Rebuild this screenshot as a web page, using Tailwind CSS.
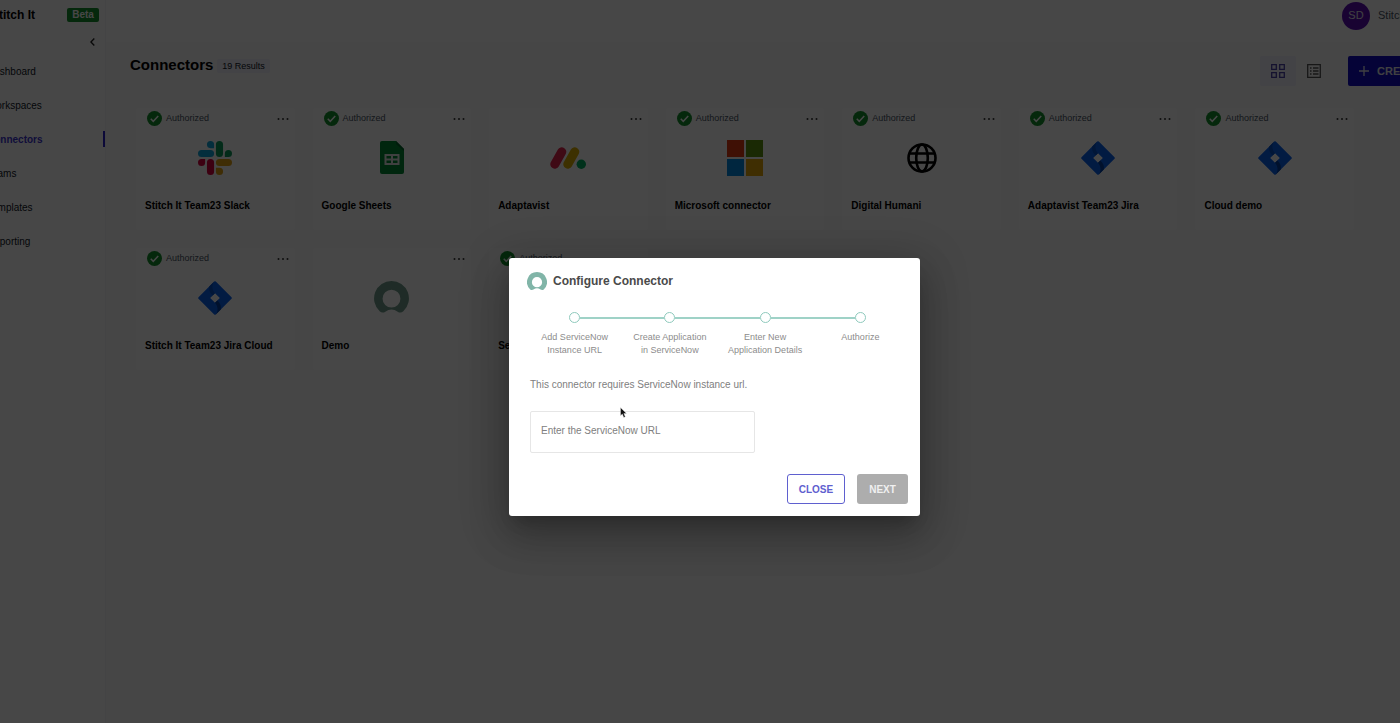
<!DOCTYPE html>
<html lang="en">
<head>
    <meta charset="UTF-8">
    <meta name="viewport" content="width=device-width, initial-scale=1.0">
    <title>Stitch It - Connectors</title>
    <!-- Tailwind CSS CDN -->
    <script src="https://cdn.jsdelivr.net/npm/@tailwindcss/browser@4"></script>
</head>
<body class="bg-white font-['Liberation_Sans',Arial,sans-serif] text-black">

    <!-- Icon sprite -->
    <svg class="hidden" xmlns="http://www.w3.org/2000/svg">
        <symbol id="icon-check" viewBox="0 0 24 24">
            <circle cx="12" cy="12" r="12" fill="#148f2c"/>
            <path d="M6 12.500l4 4 8-8.500" fill="none" stroke="#fff" stroke-width="2.400"/>
        </symbol>
        <symbol id="icon-more" viewBox="0 0 12 4">
            <circle cx="1.500" cy="2" r="1" fill="#333"/>
            <circle cx="6" cy="2" r="1" fill="#333"/>
            <circle cx="10.500" cy="2" r="1" fill="#333"/>
        </symbol>
        <symbol id="icon-slack" viewBox="0 0 24 24">
            <path fill="#d8003f" d="M5.042 15.165a2.528 2.528 0 0 1-2.52 2.523A2.528 2.528 0 0 1 0 15.165a2.527 2.527 0 0 1 2.522-2.52h2.52v2.52zM6.313 15.165a2.527 2.527 0 0 1 2.521-2.52 2.527 2.527 0 0 1 2.521 2.52v6.313A2.528 2.528 0 0 1 8.834 24a2.528 2.528 0 0 1-2.521-2.522v-6.313z"/>
            <path fill="#10a5da" d="M8.834 5.042a2.528 2.528 0 0 1-2.521-2.520A2.528 2.528 0 0 1 8.834 0a2.528 2.528 0 0 1 2.521 2.522v2.520H8.834zM8.834 6.313a2.528 2.528 0 0 1 2.521 2.521 2.528 2.528 0 0 1-2.521 2.521H2.522A2.528 2.528 0 0 1 0 8.834a2.528 2.528 0 0 1 2.522-2.521h6.312z"/>
            <path fill="#0c9a5c" d="M18.956 8.834a2.528 2.528 0 0 1 2.522-2.521A2.528 2.528 0 0 1 24 8.834a2.528 2.528 0 0 1-2.522 2.521h-2.522V8.834zM17.688 8.834a2.528 2.528 0 0 1-2.523 2.521 2.527 2.527 0 0 1-2.520-2.521V2.522A2.527 2.527 0 0 1 15.165 0a2.528 2.528 0 0 1 2.523 2.522v6.312z"/>
            <path fill="#e0a012" d="M15.165 18.956a2.528 2.528 0 0 1 2.523 2.522A2.528 2.528 0 0 1 15.165 24a2.527 2.527 0 0 1-2.520-2.522v-2.522h2.520zM15.165 17.688a2.527 2.527 0 0 1-2.520-2.523 2.526 2.526 0 0 1 2.520-2.520h6.313A2.527 2.527 0 0 1 24 15.165a2.528 2.528 0 0 1-2.522 2.523h-6.313z"/>
        </symbol>
        <symbol id="icon-sheets" viewBox="0 0 24 33">
            <path d="M2 0h14l8 8v23a2 2 0 0 1-2 2H2a2 2 0 0 1-2-2V2a2 2 0 0 1 2-2z" fill="#008a32"/>
            <path d="M16 0l8 8v2l-8-7z" fill="#05602c"/>
            <path fill-rule="evenodd" d="M4.500 13h15v11h-15zM6.500 15v2.500h4.500V15zm6.500 0v2.500h4.500V15zM6.500 19.500V22h4.500v-2.500zm6.500 0V22h4.500v-2.500z" fill="#e6e6e6"/>
        </symbol>
        <symbol id="icon-monday" viewBox="0 0 36 22">
            <path d="M4.800 17.200L11.800 4.800" stroke="#e0254c" stroke-width="9" stroke-linecap="round"/>
            <path d="M17.800 17.200L24.800 4.800" stroke="#dcae00" stroke-width="9" stroke-linecap="round"/>
            <circle cx="31.300" cy="17.200" r="4.700" fill="#00b060"/>
        </symbol>
        <symbol id="icon-microsoft" viewBox="0 0 36 36">
            <path d="M0 0h17v17H0z" fill="#e03c14"/>
            <path d="M19 0h17v17H19z" fill="#5e9410"/>
            <path d="M0 19h17v17H0z" fill="#0088e0"/>
            <path d="M19 19h17v17H19z" fill="#e0a408"/>
        </symbol>
        <symbol id="icon-globe" viewBox="0 0 30 30">
            <g fill="none" stroke="#000" stroke-width="2.600">
                <circle cx="15" cy="15" r="13.500"/>
                <ellipse cx="15" cy="15" rx="5.800" ry="13.500"/>
                <path d="M2.500 10.500h25M2.500 19.500h25"/>
            </g>
        </symbol>
        <symbol id="icon-jira" viewBox="0 0 34 34">
            <path d="M16.200.5a1.200 1.200 0 0 1 1.600 0L33.500 16.200a1.200 1.200 0 0 1 0 1.600L17.800 33.500a1.200 1.200 0 0 1-1.600 0L.5 17.800a1.200 1.200 0 0 1 0-1.600zM17 12.200L12.200 17l4.800 4.800 4.800-4.800z" fill="#0a62ee" fill-rule="evenodd"/>
            <path d="M17 12.200L14.600 14.600C11.500 11.500 10.500 8.500 11.200 5.500L16.200.5C13.500 4 14 9 17 12.200z" fill="#0650c4"/>
            <path d="M17 21.800l2.400-2.400c3.100 3.100 4.100 6.100 3.400 9.100l-5 5C20.500 30 20 25 17 21.800z" fill="#043f9e"/>
        </symbol>
        <symbol id="icon-servicenow" viewBox="0 0 36 34">
            <path fill="currentColor" fill-rule="evenodd" d="M18 0A18 18 0 0 0 5.800 31.200c1.600 1.500 4 1.700 5.800.4a10.800 10.800 0 0 1 12.800 0c1.800 1.300 4.200 1.100 5.800-.4A18 18 0 0 0 18 0zM18 9a9.200 9.200 0 1 1 0 18.400A9.200 9.200 0 0 1 18 9z"/>
        </symbol>
    </svg>

    <div class="h-screen overflow-hidden">
    <div class="relative -ml-10 -mr-[69px] flex h-[calc(100vh+51px)]">

        <!-- Sidebar -->
        <aside class="w-[146px] shrink-0 border-r border-gray-100 bg-white">
            <div class="flex h-[29px] items-center justify-between pl-[31px] pr-[6px]">
                <span class="text-[12px] font-bold">Stitch It</span>
                <span class="flex h-[14px] w-8 items-center justify-center rounded-xs bg-[#148f2c] text-[10px] font-bold text-white">Beta</span>
            </div>
            <div class="flex h-[25px] items-center justify-end pr-[10px]">
                <button type="button" aria-label="Collapse menu">
                    <svg class="h-2 w-[5px]" viewBox="0 0 5 8" fill="none" stroke="#222" stroke-width="1.400"><path d="M4.300.5L.9 4l3.400 3.500"/></svg>
                </button>
            </div>
            <nav class="flex flex-col text-[10px] text-gray-900">
                <a href="#" class="flex h-[34px] items-center pl-[27px]">Dashboard</a>
                <a href="#" class="flex h-[34px] items-center pl-[27px]">Workspaces</a>
                <a href="#" class="flex h-[34px] items-center justify-between pl-[27px] font-bold text-[#3d35d0]">
                    Connectors
                    <span class="h-4 w-[2px] bg-[#2b22c8]"></span>
                </a>
                <a href="#" class="flex h-[34px] items-center pl-[27px]">Teams</a>
                <a href="#" class="flex h-[34px] items-center pl-[27px]">Templates</a>
                <a href="#" class="flex h-[34px] items-center pl-[27px]">Reporting</a>
            </nav>
        </aside>

        <div class="flex min-w-0 flex-1 flex-col">
            <!-- Header -->
            <header class="flex h-[42px] items-center justify-end bg-white pb-[11px]">
                <div class="flex w-[127px] items-center gap-2">
                    <span class="flex size-7 items-center justify-center rounded-full bg-[#5a0cb4] text-[11px] text-gray-200">SD</span>
                    <span class="text-[11px] text-gray-600">Stitch Demo</span>
                </div>
            </header>

            <!-- Main Content -->
            <main class="flex-1 bg-[#f9f9fa] pt-[14px]">
                <div class="flex items-start pl-6 pr-[31px]">
                    <h1 class="text-[15px] leading-[18px] font-bold">Connectors</h1>
                    <span class="mt-[3px] ml-1 rounded-xs bg-[#f0f0fa] px-[5px] text-[9px] leading-[14px] text-gray-900">19 Results</span>
                    <div class="ml-auto flex items-center">
                        <button type="button" aria-label="Grid view" class="flex h-[30px] w-9 items-center justify-center rounded-xs bg-[#efeffa]">
                            <svg class="size-[14px]" viewBox="0 0 14 14" fill="none" stroke="#4b42a9" stroke-width="1.300"><path d="M.7.700h4.600v4.600H.7zM8.700.700h4.600v4.600H8.700zM.7 8.700h4.600v4.600H.7zM8.700 8.700h4.600v4.600H8.700z"/></svg>
                        </button>
                        <button type="button" aria-label="List view" class="flex h-[30px] w-9 items-center justify-center">
                            <svg class="size-[14px]" viewBox="0 0 14 14" fill="none" stroke="#555" stroke-width="1.300"><path d="M.7.700h12.600v12.600H.7zM3 4h1.500M6 4h5.500M3 7h1.500M6 7h5.500M3 10h1.500M6 10h5.500"/></svg>
                        </button>
                        <button type="button" class="ml-4 flex h-[30px] w-[90px] items-center gap-2 rounded-xs bg-[#120cc4] pl-[11px] text-[11px] font-bold text-gray-200">
                            <svg class="size-[10px]" viewBox="0 0 10 10" stroke="#e5e7eb" stroke-width="1.300"><path d="M5 0v10M0 5h10"/></svg>
                            CREATE
                        </button>
                    </div>
                </div>

                <!-- Connector cards -->
                <div class="mt-[22px] grid grid-cols-7 gap-[18px] pl-[30px] pr-[115px]">
                    <article class="rounded-xs bg-white pb-[14px]">
                        <div class="flex h-[21px] items-center pl-[11px] pr-[6px] text-[9px] text-gray-600">
                            <svg class="mr-1 size-[15px]"><use href="#icon-check"/></svg>Authorized
                            <button type="button" aria-label="More options" class="ml-auto"><svg class="h-1 w-3"><use href="#icon-more"/></svg></button>
                        </div>
                        <div class="flex h-[57px] items-center justify-center"><svg class="size-[34px]"><use href="#icon-slack"/></svg></div>
                        <h2 class="mt-[10px] pl-[9px] text-[10px] leading-5 font-bold">Stitch It Team23 Slack</h2>
                    </article>
                    <article class="rounded-xs bg-white pb-[14px]">
                        <div class="flex h-[21px] items-center pl-[11px] pr-[6px] text-[9px] text-gray-600">
                            <svg class="mr-1 size-[15px]"><use href="#icon-check"/></svg>Authorized
                            <button type="button" aria-label="More options" class="ml-auto"><svg class="h-1 w-3"><use href="#icon-more"/></svg></button>
                        </div>
                        <div class="flex h-[57px] items-center justify-center"><svg class="h-[33px] w-6"><use href="#icon-sheets"/></svg></div>
                        <h2 class="mt-[10px] pl-[9px] text-[10px] leading-5 font-bold">Google Sheets</h2>
                    </article>
                    <article class="rounded-xs bg-white pb-[14px]">
                        <div class="flex h-[21px] items-center pl-[11px] pr-[6px] text-[9px] text-gray-600">
                            <button type="button" aria-label="More options" class="ml-auto"><svg class="h-1 w-3"><use href="#icon-more"/></svg></button>
                        </div>
                        <div class="flex h-[57px] items-center justify-center"><svg class="h-[22px] w-9"><use href="#icon-monday"/></svg></div>
                        <h2 class="mt-[10px] pl-[9px] text-[10px] leading-5 font-bold">Adaptavist</h2>
                    </article>
                    <article class="rounded-xs bg-white pb-[14px]">
                        <div class="flex h-[21px] items-center pl-[11px] pr-[6px] text-[9px] text-gray-600">
                            <svg class="mr-1 size-[15px]"><use href="#icon-check"/></svg>Authorized
                            <button type="button" aria-label="More options" class="ml-auto"><svg class="h-1 w-3"><use href="#icon-more"/></svg></button>
                        </div>
                        <div class="flex h-[57px] items-center justify-center"><svg class="size-9"><use href="#icon-microsoft"/></svg></div>
                        <h2 class="mt-[10px] pl-[9px] text-[10px] leading-5 font-bold">Microsoft connector</h2>
                    </article>
                    <article class="rounded-xs bg-white pb-[14px]">
                        <div class="flex h-[21px] items-center pl-[11px] pr-[6px] text-[9px] text-gray-600">
                            <svg class="mr-1 size-[15px]"><use href="#icon-check"/></svg>Authorized
                            <button type="button" aria-label="More options" class="ml-auto"><svg class="h-1 w-3"><use href="#icon-more"/></svg></button>
                        </div>
                        <div class="flex h-[57px] items-center justify-center"><svg class="size-[30px]"><use href="#icon-globe"/></svg></div>
                        <h2 class="mt-[10px] pl-[9px] text-[10px] leading-5 font-bold">Digital Humani</h2>
                    </article>
                    <article class="rounded-xs bg-white pb-[14px]">
                        <div class="flex h-[21px] items-center pl-[11px] pr-[6px] text-[9px] text-gray-600">
                            <svg class="mr-1 size-[15px]"><use href="#icon-check"/></svg>Authorized
                            <button type="button" aria-label="More options" class="ml-auto"><svg class="h-1 w-3"><use href="#icon-more"/></svg></button>
                        </div>
                        <div class="flex h-[57px] items-center justify-center"><svg class="size-[34px]"><use href="#icon-jira"/></svg></div>
                        <h2 class="mt-[10px] pl-[9px] text-[10px] leading-5 font-bold">Adaptavist Team23 Jira</h2>
                    </article>
                    <article class="rounded-xs bg-white pb-[14px]">
                        <div class="flex h-[21px] items-center pl-[11px] pr-[6px] text-[9px] text-gray-600">
                            <svg class="mr-1 size-[15px]"><use href="#icon-check"/></svg>Authorized
                            <button type="button" aria-label="More options" class="ml-auto"><svg class="h-1 w-3"><use href="#icon-more"/></svg></button>
                        </div>
                        <div class="flex h-[57px] items-center justify-center"><svg class="size-[34px]"><use href="#icon-jira"/></svg></div>
                        <h2 class="mt-[10px] pl-[9px] text-[10px] leading-5 font-bold">Cloud demo</h2>
                    </article>
                    <article class="rounded-xs bg-white pb-[14px]">
                        <div class="flex h-[21px] items-center pl-[11px] pr-[6px] text-[9px] text-gray-600">
                            <svg class="mr-1 size-[15px]"><use href="#icon-check"/></svg>Authorized
                            <button type="button" aria-label="More options" class="ml-auto"><svg class="h-1 w-3"><use href="#icon-more"/></svg></button>
                        </div>
                        <div class="flex h-[57px] items-center justify-center"><svg class="size-[34px]"><use href="#icon-jira"/></svg></div>
                        <h2 class="mt-[10px] pl-[9px] text-[10px] leading-5 font-bold">Stitch It Team23 Jira Cloud</h2>
                    </article>
                    <article class="rounded-xs bg-white pb-[14px]">
                        <div class="flex h-[21px] items-center pl-[11px] pr-[6px] text-[9px] text-gray-600">
                            <button type="button" aria-label="More options" class="ml-auto"><svg class="h-1 w-3"><use href="#icon-more"/></svg></button>
                        </div>
                        <div class="flex h-[57px] items-center justify-center"><svg class="h-[33px] w-[35px] text-[#6f9c8b]"><use href="#icon-servicenow"/></svg></div>
                        <h2 class="mt-[10px] pl-[9px] text-[10px] leading-5 font-bold">Demo</h2>
                    </article>
                    <article class="rounded-xs bg-white pb-[14px]">
                        <div class="flex h-[21px] items-center pl-[11px] pr-[6px] text-[9px] text-gray-600">
                            <svg class="mr-1 size-[15px]"><use href="#icon-check"/></svg>Authorized
                            <button type="button" aria-label="More options" class="ml-auto"><svg class="h-1 w-3"><use href="#icon-more"/></svg></button>
                        </div>
                        <div class="flex h-[57px] items-center justify-center"><svg class="h-[33px] w-[35px] text-[#6f9c8b]"><use href="#icon-servicenow"/></svg></div>
                        <h2 class="mt-[10px] pl-[9px] text-[10px] leading-5 font-bold">ServiceNow</h2>
                    </article>
                </div>
            </main>
        </div>

        <!-- Configure dialog -->
        <div class="absolute inset-0 flex items-center justify-center bg-black/72">
            <div role="dialog" aria-labelledby="dialogTitle" class="relative w-full max-w-[411px] rounded-[3px] bg-white pt-[13px] pr-3 pb-3 pl-[18px] shadow-[0_11px_15px_-7px_rgba(0,0,0,0.2),0_20px_38px_3px_rgba(0,0,0,0.18),0_9px_46px_8px_rgba(0,0,0,0.16)]">
                <div class="flex h-5 items-center gap-[6px]">
                    <svg class="h-[19px] w-5 text-[#81b5a8]"><use href="#icon-servicenow"/></svg>
                    <h2 id="dialogTitle" class="text-[12px] font-bold text-[#4a4a4a]">Configure Connector</h2>
                </div>

                <!-- Steps -->
                <ol class="mt-[21px] flex text-center text-[9px] leading-[13px] text-[#8c8c8c]">
                    <li class="flex-1">
                        <div class="flex items-center">
                            <span class="flex-1"></span>
                            <span class="size-[11px] rounded-full border border-[#8fcabd]"></span>
                            <span class="h-[2px] flex-1 bg-[#9fd2c7]"></span>
                        </div>
                        <p class="mt-2">Add ServiceNow<br>Instance URL</p>
                    </li>
                    <li class="flex-1">
                        <div class="flex items-center">
                            <span class="h-[2px] flex-1 bg-[#9fd2c7]"></span>
                            <span class="size-[11px] rounded-full border border-[#8fcabd]"></span>
                            <span class="h-[2px] flex-1 bg-[#9fd2c7]"></span>
                        </div>
                        <p class="mt-2">Create Application<br>in ServiceNow</p>
                    </li>
                    <li class="flex-1">
                        <div class="flex items-center">
                            <span class="h-[2px] flex-1 bg-[#9fd2c7]"></span>
                            <span class="size-[11px] rounded-full border border-[#8fcabd]"></span>
                            <span class="h-[2px] flex-1 bg-[#9fd2c7]"></span>
                        </div>
                        <p class="mt-2">Enter New<br>Application Details</p>
                    </li>
                    <li class="flex-1">
                        <div class="flex items-center">
                            <span class="h-[2px] flex-1 bg-[#9fd2c7]"></span>
                            <span class="size-[11px] rounded-full border border-[#8fcabd]"></span>
                            <span class="flex-1"></span>
                        </div>
                        <p class="mt-2">Authorize</p>
                    </li>
                </ol>

                <form class="pl-[3px]">
                    <label for="instanceUrl" class="mt-5 block text-[10px] leading-4 text-[#808080]">This connector requires ServiceNow instance url.</label>
                    <input type="text" id="instanceUrl" placeholder="Enter the ServiceNow URL" class="mt-[18px] block h-[42px] w-[225px] rounded-xs border border-[#e6e6e6] px-[10px] pb-[3px] text-[10px] placeholder:text-[#808080]">
                    <div class="mt-[21px] flex justify-end gap-3 text-[10px] font-bold">
                        <button type="button" class="h-[30px] w-[58px] rounded-[3px] border border-[#5f60cf] text-[#5f60cf]">CLOSE</button>
                        <button type="submit" disabled class="h-[30px] w-[51px] rounded-[3px] bg-[#adadad] text-[#f0f0f0]">NEXT</button>
                    </div>
                </form>

                <!-- Mouse pointer -->
                <svg class="absolute top-[149px] left-[111px] h-[11px] w-[7px]" viewBox="0 0 7 11"><path d="M.5.500v8.300l1.800-1.700 1.500 3.400 1.500-.7-1.500-3.200h2.700z" fill="#111" stroke="#eee" stroke-width=".4"/></svg>
            </div>
        </div>
    </div>
    </div>
</body>
</html>
